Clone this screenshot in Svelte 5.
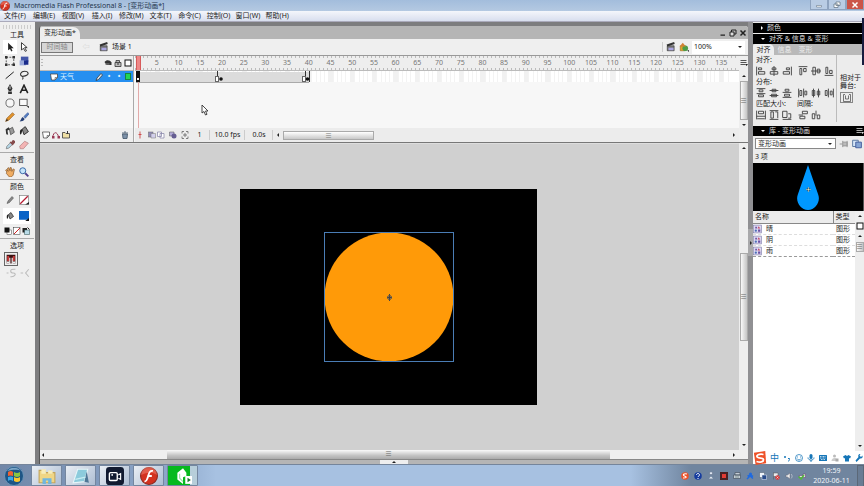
<script>
  const menus = ['文件(F)', '编辑(E)', '视图(V)', '插入(I)', '修改(M)', '文本(T)', '命令(C)', '控制(O)', '窗口(W)', '帮助(H)'];
  const frames = Array.from({ length: 27 }, (_, i) => (i + 1) * 5);
  const tools = ['arrow', 'subselect', 'transform', 'gradient', 'line', 'lasso', 'pen', 'type', 'oval', 'rect', 'pencil', 'brush', 'ink', 'bucket', 'dropper', 'eraser'];
  const alignRow = ['alL', 'alC', 'alR', 'alT', 'alM', 'alB'];
  const distRow = ['dT', 'dM', 'dB', 'dL', 'dC', 'dR'];
  const matchRow = ['mW', 'mH', 'mB', 'sV', 'sH'];
  const symbols = ['晴', '阴', '雨'];
  const apps = ['explorer', 'notes', 'camera', 'flash', 'green'];
  const tray = ['sogou', 'help', 'peak', 'redbox', 'printer', 'runner', 'copy', 'flag', 'speaker', 'usb'];
  const ime = ['punct', 'smile', 'mic', 'keyboard', 'person', 'shirt', 'wrench'];

  const k = '#444';
  const icons = {
    arrow: `<path d="M5 1v12l3-2 2 4 2-1-2-4h4z" fill="#222"/>`,
    subselect: `<path d="M4 1v12l3-3 3 5 2-1-3-5h4z" fill="#fff" stroke="#333" stroke-width="1.5"/>`,
    transform: `<rect x="2" y="2" width="12" height="12" fill="none" stroke="#555" stroke-width="1.5" stroke-dasharray="3 2"/><path d="M0 0h4v4H0zM12 0h4v4h-4zM0 12h4v4H0zM12 12h4v4h-4z" fill="#333"/>`,
    gradient: `<rect x="3" y="1" width="12" height="8" fill="#4356a8"/><rect x="1" y="7" width="10" height="8" fill="#9aa9d9"/><path d="M8 7h7v7H8z" fill="#18298a"/>`,
    line: `<path d="M1 14L14 3" stroke="#222" stroke-width="1.6"/>`,
    lasso: `<path d="M5 10C0 8 3 2 9 2s8 5 2 7-6 0-5 2 1 3-1 4" fill="none" stroke="#333" stroke-width="1.7"/>`,
    pen: `<path d="M8 0l4 7-2 4H6L4 7zM5 12h6v4H5z" fill="#333"/><path d="M8 3v5" stroke="#eee" stroke-width="1.3"/>`,
    type: `<path d="M2 14.500L8 2l6 12.500M4.500 10h7" fill="none" stroke="#222" stroke-width="2.5"/>`,
    oval: `<circle cx="8" cy="8" r="6.5" fill="#f7f7f7" stroke="#555" stroke-width="1.3"/>`,
    rect: `<rect x="1" y="2" width="12" height="10" fill="#fafafa" stroke="#555" stroke-width="1.5"/><path d="M12 13h4v3z" fill="#111"/>`,
    pencil: `<path d="M1 15l2-5L12 1l3 3-9 9z" fill="#e2942d" stroke="#8f5a1e"/><path d="M1 15l2-4 2 2z" fill="#222"/>`,
    brush: `<path d="M8 7l6-6 2 2-6 7z" fill="#527dc0" stroke="#31549b"/><path d="M1 15c2-1 2-5 5-7l3 3c-1 3-5 4-8 4z" fill="#243e74"/>`,
    ink: `<path d="M7 5l5-3 3 8-6 4z" fill="#999" stroke="#333"/><path d="M1 5l5-3 2 3-4 2 1 7-3-1z" fill="#333"/>`,
    bucket: `<path d="M5 5l5-4 5 8-7 5z" fill="#888" stroke="#222" stroke-width="1.4"/><path d="M5 5C1 5 1 9 2 14l2-2 1-4z" fill="#222"/>`,
    dropper: `<path d="M2 14l1-4 6-6 3 3-6 6z" fill="#b7d8e8" stroke="#666"/><path d="M8 3l5 5M10 5l3-4 3 2-4 4z" stroke="#854a4a" stroke-width="2" fill="#854a4a"/>`,
    eraser: `<path d="M1 10l8-8 6 3-8 9-5 0z" fill="#f3b4b4" stroke="#a97878"/>`,
    hand: `<path d="M3 8L1 5l2-1 2 3-1-5 2-1 2 5V1h2l1 6 2-4 2 1-2 9-3 3H7l-5-6z" fill="#f0ad62" stroke="#7a4b1d"/>`,
    zoom: `<circle cx="6" cy="6" r="4.8" fill="#c5e4fa" stroke="#3d6ca8" stroke-width="1.6"/><path d="M10 10l5 5" stroke="#51408c" stroke-width="3"/>`,
    strokepen: `<path d="M2 15l2-5 8-9 3 3-8 9z" fill="#888" stroke="#444"/>`,
    layerpen: `<path d="M2 15l2-5 8-9 3 3-8 9z" fill="#dbe6ee" stroke="#333" stroke-width="1.5"/>`,
    nocolor: `<rect x="1" y="1" width="14" height="14" fill="#fff" stroke="#777"/><path d="M2 14L14 2" stroke="#b51a31" stroke-width="2"/><path d="M10 15h6v-4z" fill="#222"/>`,
    bluefill: `<rect width="16" height="14" fill="#0b63c6"/><path d="M10 16h6v-5z" fill="#111"/>`,
    bw: `<rect x="6" y="6" width="9" height="9" fill="#fff" stroke="#444"/><rect x="1" y="1" width="10" height="10" fill="#111"/>`,
    none: `<rect x="1" y="1" width="13" height="14" fill="#fff" stroke="#333"/><path d="M2 14L14 2" stroke="#c22" stroke-width="2"/>`,
    swap: `<path d="M1 2h9v9H1z" fill="#222"/><path d="M5 6h10v9H5z" fill="#b9dbe8" stroke="#244"/><path d="M11 1l4 4" stroke="#222" stroke-width="2"/>`,
    magnet: `<path d="M1 15V1h14v14h-4V6H9v9H7V6H5v9z" fill="#3c1212"/><path d="M2 3h3v8H2zM11 3h3v8h-3z" fill="#c93a3a"/><path d="M1 12h4v3H1zM11 12h4v3h-4z" fill="#eee"/>`,
    smooth: `<path d="M1 8h3M15 2C4 1 7 8 12 8s3 7-5 6" fill="none" stroke="#bbb" stroke-width="1.7"/>`,
    straighten: `<path d="M1 8h4M14 2L9 8l5 6" fill="none" stroke="#bbb" stroke-width="1.7"/>`,
    clap: `<path d="M2 6h11v8H2z" fill="#777" stroke="#333"/><path d="M1 4l12-4 1 3-12 4z" fill="#333"/><path d="M4 9h8v4H4z" fill="#aaa5e1"/>`,
    shapes: `<path d="M2 6h8v8H2z" fill="#e0a527" stroke="#976f20"/><circle cx="10" cy="10" r="4.5" fill="#4d9d48"/><path d="M6 1l5 6H1z" fill="#d28235"/><path d="M13 13h3v3z" fill="#222"/>`,
    eye: `<path d="M1 6c4-5 11-4 14 1v5H5z" fill="#333"/><path d="M2 10h9" stroke="#888" stroke-width="2"/>`,
    lock: `<path d="M4 7V3h7v4M2 7h12v8H2z" fill="#bbb" stroke="#333" stroke-width="1.6"/><path d="M8 8v4" stroke="#333" stroke-width="2"/>`,
    frame: `<rect x="2" y="2" width="12" height="12" fill="#fff" stroke="#111" stroke-width="2"/>`,
    layer: `<path d="M1 2h14v7l-5 5H3z" fill="#fff" stroke="#444" stroke-width="1.5"/><path d="M10 14V9h5z" fill="#ccc" stroke="#444"/>`,
    guide: `<path d="M1 13C4-1 10 2 13 11" stroke="#9b3854" stroke-width="2" fill="none"/><path d="M0 10h5v5H0zM11 10h5v5h-5z" fill="#9b3854"/>`,
    folder: `<path d="M1 3h5l2 2h7v9H1z" fill="#efe0a6" stroke="#444" stroke-width="1.7"/><path d="M11 0v6" stroke="#333" stroke-width="2"/>`,
    trash: `<path d="M2 4h12M6 2h4M3 6h10l-1 9H4z" fill="#7d91a9" stroke="#46586d" stroke-width="1.7"/>`,
    center: `<path d="M8 1v14M5 7h6" stroke="#cb3f3f" stroke-width="1.7"/>`,
    onion: `<rect x="1" y="2" width="9" height="10" fill="#928cbc" stroke="#666"/><path d="M6 5h9v9H6z" fill="#d2cfeb" stroke="#777"/>`,
    onionOut: `<path d="M1 2h8v9H1zM6 5h8v9H6z" fill="#fff" stroke="#8886aa" stroke-width="1.5"/>`,
    multi: `<path d="M1 2h9v8H1z" fill="#b2abd7" stroke="#555"/><circle cx="10" cy="10" r="5" fill="#655d92"/>`,
    markers: `<path d="M2 5V1h4M10 1h4v4M14 11v4h-4M6 15H2v-4M6 6h4v4H6z" fill="none" stroke="#666" stroke-width="1.6"/>`,
    options: `<path d="M1 3h12M1 7h12M1 11h9" stroke="#555" stroke-width="2"/><path d="M10 10h6l-3 4z" fill="#222"/>`,
    alL: `<path d="M1 1v14M4 3h5v3H4zM4 9h10v4H4z" fill="none" stroke="${k}" stroke-width="1.5"/>`,
    alC: `<path d="M8 0v16M5 3h6v3H5zM2 9h12v4H2z" fill="none" stroke="${k}" stroke-width="1.5"/>`,
    alR: `<path d="M15 1v14M7 3h5v3H7zM2 9h10v4H2z" fill="none" stroke="${k}" stroke-width="1.5"/>`,
    alT: `<path d="M1 1h14M3 4h3v10H3zM9 4h4v5H9z" fill="none" stroke="${k}" stroke-width="1.5"/>`,
    alM: `<path d="M0 8h16M3 2h4v12H3zM10 5h4v6h-4z" fill="none" stroke="${k}" stroke-width="1.5"/>`,
    alB: `<path d="M1 15h14M3 2h3v10H3zM9 7h4v5H9z" fill="none" stroke="${k}" stroke-width="1.5"/>`,
    dT: `<path d="M1 1h14M5 3h6v3H5zM1 9h14M4 11h8v3H4z" fill="none" stroke="${k}" stroke-width="1.5"/>`,
    dM: `<path d="M1 4h14M5 2h6v4H5zM1 12h14M4 10h8v4H4z" fill="none" stroke="${k}" stroke-width="1.5"/>`,
    dB: `<path d="M1 7h14M5 2h6v3H5zM1 15h14M4 10h8v3H4z" fill="none" stroke="${k}" stroke-width="1.5"/>`,
    dL: `<path d="M1 1v14M3 4h3v8H3zM9 1v14M11 5h3v6h-3z" fill="none" stroke="${k}" stroke-width="1.5"/>`,
    dC: `<path d="M4 1v14M2 4h4v8H2zM12 1v14M10 5h4v6h-4z" fill="none" stroke="${k}" stroke-width="1.5"/>`,
    dR: `<path d="M7 1v14M2 4h3v8H2zM15 1v14M10 5h3v6h-3z" fill="none" stroke="${k}" stroke-width="1.5"/>`,
    mW: `<path d="M1 1v14M15 1v14M4 2h8v4H4zM1 10h14M2 14h12" fill="none" stroke="${k}" stroke-width="1.5"/>`,
    mH: `<path d="M1 1h14M1 15h14M3 3h4v10H3zM10 3h4v10" fill="none" stroke="${k}" stroke-width="1.5"/>`,
    mB: `<path d="M1 2h7v10H1zM10 6h4v7h-4M1 15h14" fill="none" stroke="${k}" stroke-width="1.5"/>`,
    sV: `<path d="M7 2h8v4H7zM1 8h7M3 10h8v4H3z" fill="none" stroke="${k}" stroke-width="1.5"/>`,
    sH: `<path d="M2 6h4v8H2zM8 1v8M10 8h4v6h-4z" fill="none" stroke="${k}" stroke-width="1.5"/>`,
    stageAlign: `<path d="M1 1h3M1 1v14h14V1h-3M5 3v7h6V3" fill="none" stroke="#444" stroke-width="1.4"/>`,
    symbol: `<rect x="1" y="1" width="14" height="14" fill="#ddd9f0" stroke="#7270a0"/><path d="M4 4h3v3H4zM9 9h4v4H9z" fill="#6b4fa4"/><path d="M10 3l3 4H8z" fill="#c34d69"/><circle cx="5" cy="11" r="2" fill="#4b70b7"/>`,
    pin: `<path d="M1 8h5M6 3v10M6 5h7v6H6M13 3v10" fill="#bbb" stroke="#999" stroke-width="1.6"/>`,
    newlib: `<path d="M1 2h9v10H1z" fill="#d7e7f8" stroke="#59769f" stroke-width="1.5"/><path d="M6 5h9v9H6z" fill="#86a5d4" stroke="#435d9d" stroke-width="1.5"/>`,
    explorer: `<path d="M1 3h5l1 2h8v9H1z" fill="#f0d685" stroke="#c4a55c"/><path d="M3 2h4v4H3zM9 3h4v3H9z" fill="#f7edbc"/><path d="M4 10h8v5H9v-3H7v3H4z" fill="#71b6de"/>`,
    notes: `<path d="M5 2h9l-3 11-10 1z" fill="#8ccbdc" stroke="#e6f5f8"/><path d="M11 13l2-9 2 10z" fill="#4f7796"/><path d="M3 11l9-2" stroke="#c9edf3"/>`,
    camera: `<rect width="16" height="16" rx="3" fill="#111a30"/><rect x="3" y="5" width="7" height="7" rx="1" fill="none" stroke="#fff" stroke-width="1.2"/><path d="M11 7l2-1v5l-2-1" fill="none" stroke="#fff"/><circle cx="5.5" cy="7" r=".8" fill="#fff"/>`,
    flash: `<circle cx="8" cy="8" r="7.5" fill="#d3321f" stroke="#8c2a22"/><path d="M1 7a7 7 0 0 1 14 0c-4-3-9-2-14 0z" fill="#ee7868" opacity=".6"/><path d="M11.5 3.5C8 3 8 6 7 9s-1 3.5-3 4M6.5 8h4" fill="none" stroke="#fff" stroke-width="1.6"/>`,
    green: `<path d="M8 1L3 5v6l5 4V9l3-1V5z" fill="#fff"/><path d="M5 6v4l3 3" fill="none" stroke="#9be0a4"/><path d="M10 8h6v7h-6z" fill="#fff"/><path d="M12 9.500v4l3-2z" fill="#1c7a2c"/>`,
    sogou: `<circle cx="8" cy="8" r="7.5" fill="#f05025"/><path d="M12 4C6 2 2 6 7 8s5 4-3 4" stroke="#fff" stroke-width="2.2" fill="none"/>`,
    help: `<circle cx="8" cy="8" r="7.5" fill="#163c9f"/><path d="M5 6c0-4 6-4 6 0 0 2-3 2-3 4M8 12v2" stroke="#fff" stroke-width="2" fill="none"/>`,
    peak: `<path d="M5 0h6v5H5z" fill="#dfe7f3" stroke="#58677f"/><path d="M4 13l4-4 4 4z" fill="#e9eef4"/>`,
    redbox: `<rect width="16" height="16" fill="#4a2023"/><rect x="4" y="4" width="8" height="8" fill="#e33b35"/>`,
    printer: `<path d="M4 1h10v5H4zM1 6h14v7H1z" fill="#c4ccd5" stroke="#4c5967" stroke-width="1.5"/><path d="M4 10h8" stroke="#465"/>`,
    runner: `<circle cx="9" cy="4" r="3" fill="#1f6ae0"/><path d="M2 14l6-6 6 5M3 8l6-2 5 3" stroke="#1f6ae0" stroke-width="3" fill="none"/>`,
    copy: `<path d="M1 1h10v10H1z" fill="#eef3fa" stroke="#456"/><path d="M6 6h9v9H6z" fill="#284b8b" stroke="#e7edf6"/>`,
    flag: `<path d="M3 1v14M3 2h9v7H3" fill="#e8ebf0" stroke="#555"/><circle cx="11" cy="11" r="4.5" fill="#d73837"/><path d="M9 9l4 4M13 9l-4 4" stroke="#fff"/>`,
    speaker: `<path d="M2 6h3l5-4v12l-5-4H2z" fill="#eee" stroke="#667"/><path d="M12 4c3 3 3 6 0 9" stroke="#eee" fill="none"/>`,
    usb: `<path d="M2 7h8V4h5v7H3z" fill="#dce8d8" stroke="#637"/><path d="M1 9l5 5 6-8" stroke="#52b83b" stroke-width="3" fill="none"/>`,
    punct: `<circle cx="4" cy="6" r="2" fill="#1676b8"/><path d="M10 9h3c0 3-1 5-3 6" stroke="#1676b8" stroke-width="2" fill="none"/>`,
    smile: `<circle cx="8" cy="8" r="7" fill="none" stroke="#1676b8" stroke-width="1.5"/><path d="M5 5v2M11 5v2M4 9c2 4 6 4 8 0" fill="none" stroke="#1676b8" stroke-width="1.5"/>`,
    mic: `<rect x="5" y="0" width="6" height="10" rx="3" fill="#1676b8"/><path d="M2 7c0 7 12 7 12 0M8 12v4" stroke="#1676b8" stroke-width="1.8" fill="none"/>`,
    keyboard: `<rect x="0" y="2" width="16" height="12" rx="1" fill="#1676b8"/><path d="M2 5h12M2 8h12M4 11h8" stroke="#fff" stroke-width="1.4" stroke-dasharray="2 1"/>`,
    person: `<circle cx="7" cy="4" r="3" fill="#bbb"/><path d="M1 14c0-8 12-8 12 0z" fill="#ccc"/><path d="M9 9h6v6H9z" fill="#aaa"/>`,
    shirt: `<path d="M5 2l3 2 3-2 5 3-2 4-2-1v7H4V8L2 9 0 5z" fill="#1676b8"/>`,
    wrench: `<path d="M15 3l-3 3-3-3 2-3C6 0 6 4 7 6l-6 7 2 3 7-7c4 1 6-2 5-6z" fill="#1676b8"/>`,
    min: `<path d="M3 12h9" stroke="#222" stroke-width="2.5"/>`,
    restore: `<path d="M5 2h9v8H5z" fill="none" stroke="#222" stroke-width="2"/><path d="M2 6h8v8H2z" fill="#ddd" stroke="#222" stroke-width="2"/>`,
    minW: `<path d="M3 9h10v3H3z" fill="#fff" stroke="#567"/>`,
    restoreW: `<path d="M6 2h8v7H6zM2 6h8v7H2z" fill="#fff" stroke="#567" stroke-width="1.3"/>`,
    close: `<path d="M3 3l10 10M13 3L3 13" stroke="#222" stroke-width="3"/>`,
    closeW: `<path d="M3 3l10 10M13 3L3 13" stroke="#fff" stroke-width="3"/>`
  };
</script>

{#snippet icon(name, cls = '')}
  <svg class="ic {cls}" viewBox="0 0 16 16" aria-hidden="true">{@html icons[name]}</svg>
{/snippet}

<div class="app">
  <header class="title">
    {@render icon('flash')}
    <h1>Macromedia Flash Professional 8 - [变形动画*]</h1>
    <div class="winbtns">
      <button aria-label="最小化">{@render icon('minW', 's')}</button>
      <button aria-label="还原">{@render icon('restoreW', 's')}</button>
      <button class="x" aria-label="关闭">{@render icon('closeW', 's')}</button>
    </div>
  </header>
  <nav class="menu">
    {#each menus as m}<button>{m}</button>{/each}
  </nav>

  <main>
    <aside class="tools">
      <div class="grip"></div>
      <h2>工具</h2>
      <div class="grid">
        {#each tools as t, i}<button class:on={i === 0} aria-label={t}>{@render icon(t)}</button>{/each}
      </div>
      <h2 class="sep">查看</h2>
      <div class="grid">
        <button aria-label="手形">{@render icon('hand')}</button>
        <button aria-label="缩放">{@render icon('zoom')}</button>
      </div>
      <h2 class="sep">颜色</h2>
      <div class="grid color">
        <button aria-label="笔触颜色">{@render icon('strokepen', 's')}</button>
        <button aria-label="无笔触">{@render icon('nocolor')}</button>
        <button class="on" aria-label="填充颜色">{@render icon('bucket', 's')}</button>
        <button class="on" aria-label="蓝色">{@render icon('bluefill')}</button>
      </div>
      <div class="three">
        <button aria-label="黑白">{@render icon('bw', 's')}</button>
        <button aria-label="没有颜色">{@render icon('none', 's')}</button>
        <button aria-label="交换颜色">{@render icon('swap', 's')}</button>
      </div>
      <h2 class="sep">选项</h2>
      <div class="grid opts">
        <button class="mag" aria-label="贴紧">{@render icon('magnet')}</button><span></span>
        <button aria-label="平滑">{@render icon('smooth')}</button>
        <button aria-label="伸直">{@render icon('straighten')}</button>
      </div>
    </aside>

    <section class="doc">
      <div class="tabs">
        <button class="tab">变形动画*</button>
        <div class="docbtns">
          <button aria-label="最小化文档">{@render icon('min', 's')}</button>
          <button aria-label="还原文档">{@render icon('restore', 's')}</button>
          <button aria-label="关闭文档">{@render icon('close', 's')}</button>
        </div>
      </div>
      <div class="editbar">
        <button class="tl">时间轴</button>
        <span class="back">⇦</span>
        {@render icon('clap')}
        <span>场景 1</span>
        <span class="fill"></span>
        <button class="split" aria-label="编辑场景">{@render icon('clap')}</button>
        <button aria-label="编辑元件">{@render icon('shapes')}</button>
        <select aria-label="显示比例"><option>100%</option></select>
        <i class="down dd"></i>
      </div>

      <div class="timeline">
        <div class="layers">
          <div class="lhead">
            <i class="dots"></i>
            {@render icon('eye', 's')}{@render icon('lock', 's')}{@render icon('frame', 's')}
          </div>
          <div class="layer">
            {@render icon('layer', 's')}<span>天气</span><span class="fill"></span>
            {@render icon('layerpen', 's')}<b>•</b><b>•</b><i class="outline"></i>
          </div>
          <div class="fill"></div>
          <div class="lfoot">
            <button aria-label="插入图层">{@render icon('layer', 's')}</button>
            <button aria-label="添加引导层">{@render icon('guide', 's')}</button>
            <button aria-label="插入文件夹">{@render icon('folder', 's')}</button>
            <span class="fill"></span>
            <button aria-label="删除图层">{@render icon('trash', 's')}</button>
          </div>
        </div>
        <div class="framearea">
          <div class="ruler">
            {#each frames as f}<span>{f}</span>{/each}
          </div>
          <div class="frames">
            {#each frames as f}<i></i>{/each}
          </div>
          <svg class="keys" viewBox="0 0 176 14" aria-hidden="true">
            <rect x="1" y="1" width="173" height="10" fill="#dcdcdc" />
            <path d="M1 11.5H174" stroke="#aaa" />
            <rect x="1" width="4" height="11" fill="#111" /><rect x="2" y="7" width="2" height="2" fill="#fff" />
            <path d="M82.5 0v11M170.500 0v11M174.500 0v11" stroke="#333" />
            <rect x="80.500" y="5.500" width="3" height="5" fill="#fff" stroke="#666" />
            <rect x="167.500" y="5.500" width="3" height="5" fill="#fff" stroke="#666" />
            <circle cx="86" cy="8" r="1.800" fill="#111" /><circle cx="172.500" cy="8" r="1.800" fill="#111" />
          </svg>
          <div class="head"></div>
          <div class="tfoot">
            <button aria-label="帧居中">{@render icon('center', 's')}</button>
            <button aria-label="绘图纸外观">{@render icon('onion', 's')}</button>
            <button aria-label="绘图纸外观轮廓">{@render icon('onionOut', 's')}</button>
            <button class="gap" aria-label="编辑多个帧">{@render icon('multi', 's')}</button>
            <button aria-label="修改绘图纸标记">{@render icon('markers', 's')}</button>
            <span class="n1">1</span><span class="n2">10.0 fps</span><span class="n3">0.0s</span>
            <i class="left"></i>
            <div class="hthumb">≡</div>
            <span class="fill"></span>
            <i class="right"></i>
          </div>
          <svg class="pointer" viewBox="0 0 8 12" aria-hidden="true"><path d="M1 1v8l2-1.500 1.500 3.500 1.500-.7L4.500 7H7z" fill="#fff" stroke="#333" stroke-width=".9" /></svg>
        </div>
        <div class="vcol tv">
          {@render icon('options', 's')}
          <i class="up"></i>
          <div class="vthumb t1">≡</div>
          <i class="down"></i>
        </div>
      </div>

      <div class="work">
        <div class="pasteboard">
          <div class="stage">
            <svg width="132" height="132" viewBox="0 0 132 132" role="img" aria-label="橙色圆形">
              <circle cx="66" cy="66" r="64.500" fill="#ff9a08" />
              <rect x="1.500" y="1.500" width="129" height="129" fill="none" stroke="#4a7db5" />
              <path d="M66.500 63v7M64 66.500h5" stroke="#444" /><circle cx="66.500" cy="66.500" r="2" fill="none" stroke="#555" />
            </svg>
          </div>
        </div>
        <div class="vcol sv">
          <i class="up"></i>
          <div class="vthumb t2">≡</div>
          <span class="fill"></span>
          <i class="down"></i>
        </div>
      </div>
      <div class="hscroll">
        <i class="left"></i><div class="long">≡</div><i class="right"></i>
      </div>
      <div class="collapse"><button aria-label="展开属性面板"><i class="up"></i></button></div>
    </section>

    <aside class="panels">
      <button class="fold" aria-label="折叠面板"><i class="right"></i></button>
      <h3><i class="right"></i>颜色</h3>
      <h3><i class="down"></i>对齐 &amp; 信息 &amp; 变形</h3>
      <div class="ptabs"><button class="act">对齐</button><button>信息</button><button>变形</button></div>
      <div class="align">
        <div class="sets">
          <p>对齐:</p>
          <div class="row">{#each alignRow as a}<button aria-label={a}>{@render icon(a)}</button>{/each}</div>
          <p>分布:</p>
          <div class="row">{#each distRow as a}<button aria-label={a}>{@render icon(a)}</button>{/each}</div>
          <p class="two"><span>匹配大小:</span><span>间隔:</span></p>
          <div class="row">{#each matchRow as a}<button aria-label={a}>{@render icon(a)}</button>{/each}</div>
        </div>
        <div class="rel">
          <span>相对于<br />舞台:</span>
          <button aria-label="相对于舞台">{@render icon('stageAlign', 's')}</button>
        </div>
      </div>
      <h3 class="lib"><i class="down"></i>库 - 变形动画<span class="fill"></span>{@render icon('options', 's inv')}</h3>
      <div class="libsel">
        <select aria-label="库"><option>变形动画</option></select>
        <i class="down dd"></i>
        <button aria-label="固定当前库">{@render icon('pin')}</button>
        <button aria-label="新建库面板">{@render icon('newlib')}</button>
      </div>
      <p class="count">3 项</p>
      <div class="preview">
        <svg width="24" height="48" viewBox="0 0 24 48" role="img" aria-label="雨滴">
          <path d="M12 2L2 31C-1 38 4 47 12 47s13-9 10-16z" fill="#0098ff" />
          <path d="M12.500 24v5M10 26.500h5" stroke="#d6e8c8" /><circle cx="12.500" cy="26.500" r="1.500" fill="none" stroke="#456" />
        </svg>
      </div>
      <div class="items">
        <table>
          <thead><tr><th>名称</th><th class="ty">类型</th></tr></thead>
          <tbody>
            {#each symbols as s}
              <tr><td>{@render icon('symbol')}<span>{s}</span></td><td class="ty">图形</td></tr>
            {/each}
          </tbody>
        </table>
        <div class="vcol lv">
          <i class="up"></i>{@render icon('frame', 's')}<i class="up"></i>
          <div class="vthumb t3">≡</div>
          <span class="fill"></span><i class="down"></i>
        </div>
      </div>
      <div class="ime">
        <span class="zh">中</span>
        {#each ime as m}<button aria-label={m}>{@render icon(m, 's')}</button>{/each}
        <svg class="slogo" viewBox="0 0 16 16" aria-hidden="true"><path d="M1 2L14 0l1 14-12 2z" fill="#ee5128" /><path d="M12 4C7 3 3 5 5 7s7 0 7 3-4 3-8 2" fill="none" stroke="#fff" stroke-width="2" /></svg>
      </div>
      <i class="navy"></i>
    </aside>
  </main>

  <footer>
    <button class="start" aria-label="开始">
      <svg viewBox="0 0 20 20"><circle cx="10" cy="10" r="9.500" fill="#1e5585" stroke="#6b94b8" /><path d="M3 5a9 9 0 0 1 14 0c-4-2-9-1-14 0z" fill="#a5cbe4" opacity=".7" /><path d="M4 6q3-2 5 0v4q-3-1-5 0z" fill="#ee6231" /><path d="M10 6q3 2 6 0v4q-3 2-6 0z" fill="#8bc540" /><path d="M4 11q3-1 5 0v4q-3-2-5 0z" fill="#3aa7e8" /><path d="M10 11q3 2 6 0v4q-3 2-6 0z" fill="#fac62e" /></svg>
    </button>
    {#each apps as a}<button class="task {a}" aria-label={a}>{@render icon(a)}</button>{/each}
    <span class="fill"></span>
    <div class="tray">
      {#each tray as t}<button aria-label={t}>{@render icon(t, 's')}</button>{/each}
    </div>
    <time><span>19:59</span><span>2020-06-11</span></time>
    <button class="desk" aria-label="显示桌面"></button>
  </footer>
</div>

<style>
  :global(body) { background: #ececec; }
  .app { display: flex; flex-direction: column; height: 100vh; overflow: hidden; font: 7px/10px "Noto Sans", "Noto Sans CJK SC", sans-serif; color: #222; }
  .app * { box-sizing: border-box; }
  h1, h2, h3, p { margin: 0; font: inherit; }
  button { border: 0; padding: 0; margin: 0; background: none; font: inherit; color: inherit; display: flex; align-items: center; justify-content: center; }
  select { appearance: none; font: inherit; color: inherit; border: 0; border-radius: 0; margin: 0; padding: 0 2px; background: #fff; }
  .ic { width: 10px; height: 10px; flex: none; display: block; }
  .s { width: 8px; height: 8px; }
  .inv { filter: invert(1); }
  .fill { flex: 1; }
  .up, .down, .left, .right { width: 0; height: 0; flex: none; border: 2px solid transparent; }
  .up { border-top: 0; border-bottom-color: #222; }
  .down { border-bottom: 0; border-top-color: #222; }
  .left { border-left: 0; border-right-color: #222; }
  .right { border-right: 0; border-left-color: #222; }

  .title { display: flex; align-items: center; gap: 4px; height: 11px; flex: none; background: linear-gradient(#a3bddc, #b4c9e2); }
  .title h1 { flex: 1; color: #24364e; line-height: 11px; }
  .winbtns { display: flex; height: 10px; align-self: flex-start; }
  .winbtns button { width: 18px; border: 1px solid #8ea3bf; border-top: 0; background: #b9cce4; }
  .winbtns .x { background: #cb5549; }
  .menu { display: flex; flex: none; gap: 5px; height: 11px; padding-left: 3px; background: linear-gradient(#f4f6fb, #d8deee); border-bottom: 1px solid #aab; }
  .menu button { min-width: 24px; }

  main { flex: 1; display: flex; min-height: 0; background: #7d7d7f; }
  .tools { width: 35px; background: #efefef; display: flex; flex-direction: column; flex: none; padding-right: 1px; }
  .grip { height: 4px; margin: 3px 3px 0; background: repeating-linear-gradient(90deg, #ccc 0 1px, transparent 1px 3px); flex: none; }
  h2 { text-align: center; line-height: 11px; }
  .sep { border-top: 1px solid #aaa; padding-top: 1px; }
  .grid { display: grid; grid-template-columns: 14px 14px; grid-auto-rows: 14px; padding-left: 3px; }
  .on { background: #fff; }
  .color { grid-auto-rows: 16px; }
  .three { display: flex; justify-content: center; gap: 1px; height: 14px; }
  .opts { padding-top: 1px; padding-left: 4px; }
  .mag { border: 1px solid #666; }

  .doc { flex: 1; min-width: 0; display: flex; flex-direction: column; margin: 4px 0 0 4px; border-left: 1px solid #555; background: #ececec; border-radius: 3px 3px 0 0; overflow: hidden; }
  .tabs { display: flex; height: 13px; flex: none; justify-content: space-between; background: #b5b5b5; }
  .tab { background: #eee; padding: 0 4px; margin-top: 1px; border-radius: 2px 7px 0 0; }
  .docbtns { display: flex; gap: 2px; padding-right: 1px; }
  .editbar { display: flex; align-items: center; height: 17px; flex: none; gap: 3px; background: #efefef; border-bottom: 1px solid #999; }
  .tl { width: 32px; height: 11px; border: 1px solid #777; background: #d6d6d6; color: #888; margin-left: 1px; }
  .back { color: #ccc; width: 20px; text-align: center; }
  .split { border-left: 1px solid #ccc; padding-left: 3px; }
  .editbar select { width: 53px; height: 13px; margin-right: 1px; }
  .dd { margin-left: -11px; margin-right: 6px; z-index: 1; }

  .timeline { display: flex; height: 86px; flex: none; background: #f7f7f7; }
  .layers { width: 94px; flex: none; display: flex; flex-direction: column; border-right: 1px solid #aaa; }
  .lhead { display: flex; align-items: center; justify-content: flex-end; gap: 2px; height: 15px; padding-right: 1px; background: #eee; border-bottom: 1px solid #bbb; }
  .dots { width: 2px; height: 9px; margin-right: auto; margin-left: 1px; background: repeating-linear-gradient(#bbb 0 1px, transparent 1px 3px); }
  .layer { display: flex; align-items: center; gap: 2px; height: 11px; padding: 0 2px 0 10px; background: #268ff0; color: #d9efff; }
  .layer b { width: 8px; text-align: center; }
  .outline { width: 6px; height: 7px; background: #22d556; border: 1px solid #168640; }
  .lfoot { display: flex; align-items: center; gap: 2px; height: 14px; padding: 0 4px 0 2px; background: #efefef; }
  .framearea { position: relative; flex: 1; min-width: 0; display: grid; grid-template: 15px 11px 1fr 14px / minmax(0, 1fr); padding-left: 1px; }
  .ruler { grid-area: 1 / 1; display: flex; padding: 0 7px 0 11px; color: #777; background: repeating-linear-gradient(90deg, #bbb 0 1px, transparent 1px 4px) 0 0 / 100% 2px no-repeat, repeating-linear-gradient(90deg, #bbb 0 1px, transparent 1px 4px) 0 12px / 100% 2px no-repeat, #eee; border-bottom: 1px solid #bbb; }
  .ruler span { flex: 1; width: 0; text-align: center; line-height: 14px; }
  .frames { grid-area: 2 / 1; display: flex; padding: 0 7px 0 11px; background: #fff; }
  .frames i { flex: 1; background: linear-gradient(90deg, transparent 40%, #f1f1f1 40% 60%, transparent 60%), repeating-linear-gradient(90deg, #f3f3f3 0 1px, #fff 1px 20%); }
  .keys { grid-area: 2 / 1; width: 176px; height: 14px; }
  .head { grid-area: 1 / 1 / 4 / 2; width: 5px; margin-left: 1px; background: linear-gradient(90deg, #c44, #e88 30% 70%, #c44) 0 0 / 100% 14px no-repeat, linear-gradient(#e3aaaa, #e3aaaa) 2px 26px / 1px 100% no-repeat; }
  .tfoot { grid-area: 4 / 1; display: flex; align-items: center; background: #ececec; padding: 0 4px 0 1px; gap: 1px; }
  .tfoot .gap, .tfoot button:nth-child(2), .tfoot button:nth-child(5) { margin-left: 3px; }
  .n1, .n2, .n3 { text-align: center; border-right: 1px solid #ccc; }
  .n1 { width: 20px; } .n2 { width: 34px; } .n3 { width: 27px; }
  .tfoot .left { margin: 0 3px 0 3px; }
  .hthumb { width: 91px; height: 9px; border: 1px solid #aaa; background: linear-gradient(#fff, #c8c8c8); text-align: center; line-height: 7px; color: #777; }
  .pointer { position: absolute; left: 67px; top: 48px; width: 8px; height: 12px; }
  .vcol { width: 9px; flex: none; display: flex; flex-direction: column; align-items: center; background: #eee; }
  .vthumb { width: 8px; border: 1px solid #aaa; background: linear-gradient(90deg, #f9f9f9, #c5c5c5); display: flex; align-items: center; justify-content: center; color: #666; }
  .tv { padding: 3px 0 16px; gap: 4px; }
  .tv .up { margin-top: 4px; }
  .t1 { flex: 1; }

  .work { flex: 1; min-height: 0; display: flex; border-top: 1px solid #777; }
  .pasteboard { flex: 1; display: flex; align-items: center; justify-content: center; background: #d0d0d0; border-top: 1px solid #ddd; padding-right: 2px; }
  .stage { width: 297px; height: 216px; background: #000; display: flex; align-items: center; justify-content: center; }
  .sv { padding: 4px 0; }
  .t2 { height: 88px; margin-top: 104px; }
  .hscroll { display: flex; align-items: center; height: 9px; flex: none; background: #efefef; padding: 0 13px 0 2px; }
  .long { flex: 1; height: 9px; margin: 0 123px 0 123px; background: linear-gradient(#fafafa, #c4c4c4 60%, #aaa); text-align: center; line-height: 8px; color: #666; }
  .collapse { height: 5px; flex: none; background: #b5b5b5; border-top: 1px solid #888; display: flex; justify-content: center; }
  .collapse button { width: 28px; background: #eee; }

  .panels { width: 116px; flex: none; display: flex; flex-direction: column; border-left: 5px solid #909093; background: #ececec; position: relative; }
  .fold { position: absolute; left: -5px; top: 50%; width: 5px; height: 27px; margin-top: -14px; background: #a9a9ab; }
  h3 { display: flex; align-items: center; gap: 4px; height: 10px; flex: none; padding-left: 8px; margin-top: 1px; background: #000; color: #ddd; }
  h3 .right { border-left-color: #fff; }
  h3 .down { border-top-color: #fff; }
  .ptabs { display: flex; height: 11px; flex: none; background: #b9b9b9; color: #eee; }
  .ptabs button { width: 21px; }
  .ptabs .act { background: #eee; color: #222; border-radius: 2px 5px 0 0; }
  .align { display: flex; flex: none; height: 70px; padding: 0 0 3px 3px; }
  .sets { width: 80px; flex: none; }
  .row { display: flex; height: 12px; gap: 3px; align-items: center; }
  .row button:nth-child(4) { margin-left: 3px; }
  .two { display: flex; gap: 11px; white-space: nowrap; }
  .rel { border-left: 1px solid #bbb; padding-left: 3px; display: flex; flex-direction: column; justify-content: center; white-space: nowrap; line-height: 8px; }
  .rel button { width: 13px; height: 11px; border: 1px solid #888; margin-top: 2px; }
  .libsel { display: flex; align-items: center; height: 15px; flex: none; padding: 0 2px; }
  .libsel select { width: 81px; height: 11px; border: 1px solid #888; line-height: 9px; }
  .libsel button { margin-left: 3px; }
  .libsel .dd { margin-left: -8px; margin-right: 4px; }
  .count { height: 12px; padding-left: 2px; flex: none; line-height: 12px; }
  .preview { height: 48px; flex: none; background: #000; display: flex; justify-content: center; border-right: 1px solid #555; }
  .items { flex: 1; display: flex; min-height: 0; background: #fff; }
  table { flex: 1; border-collapse: collapse; align-self: flex-start; }
  th, td { padding: 0; height: 11px; text-align: left; font-weight: 400; line-height: 10px; }
  th { height: 12px; background: #ececec; border-bottom: 1px solid #888; padding-left: 2px; }
  th.ty { border-left: 1px solid #888; }
  td span { margin-left: 4px; }
  td .ic { display: inline-block; vertical-align: top; width: 9px; }
  tbody tr { border-bottom: 1px dashed #ddd; }
  tbody tr:last-child { border-bottom-color: #999; }
  .ty { width: 22px; }
  td.ty { padding-left: 3px; }
  .lv { padding: 4px 0; gap: 5px; }
  .t3 { height: 10px; }
  .ime { position: relative; display: flex; align-items: center; justify-content: flex-end; gap: 4px; height: 13px; flex: none; background: #fff; color: #1676b8; padding-right: 1px; }
  .zh { font-size: 9px; }
  .slogo { position: absolute; left: 0; top: 0; width: 14px; height: 14px; }
  .navy { position: absolute; right: 0; top: -4px; width: 2px; height: 47px; background: #171c3e; }

  footer { display: flex; align-items: center; height: 22px; flex: none; gap: 3px; background: linear-gradient(90deg, #7187a8, #8ea8cb 20%, #a7c1e1 25% 73%, #70859f 80% 100%); border-top: 1px solid #75859b; }
  .start { width: 28px; }
  .start svg { width: 20px; height: 20px; }
  .task { width: 31px; height: 21px; background: linear-gradient(135deg, #e9eef4, #aebed3); border: 1px solid #74869f; border-radius: 1px; }
  .task .ic { width: 18px; height: 18px; }
  .task.green { background: linear-gradient(90deg, #06b91e 75%, #b7ceda 75%); }
  .tray { display: flex; gap: 5px; }
  time { display: flex; flex-direction: column; align-items: center; width: 45px; color: #f1f5fa; line-height: 10px; }
  .desk { width: 7px; height: 22px; border: 1px solid #5b6878; background: #697c94; }
</style>
